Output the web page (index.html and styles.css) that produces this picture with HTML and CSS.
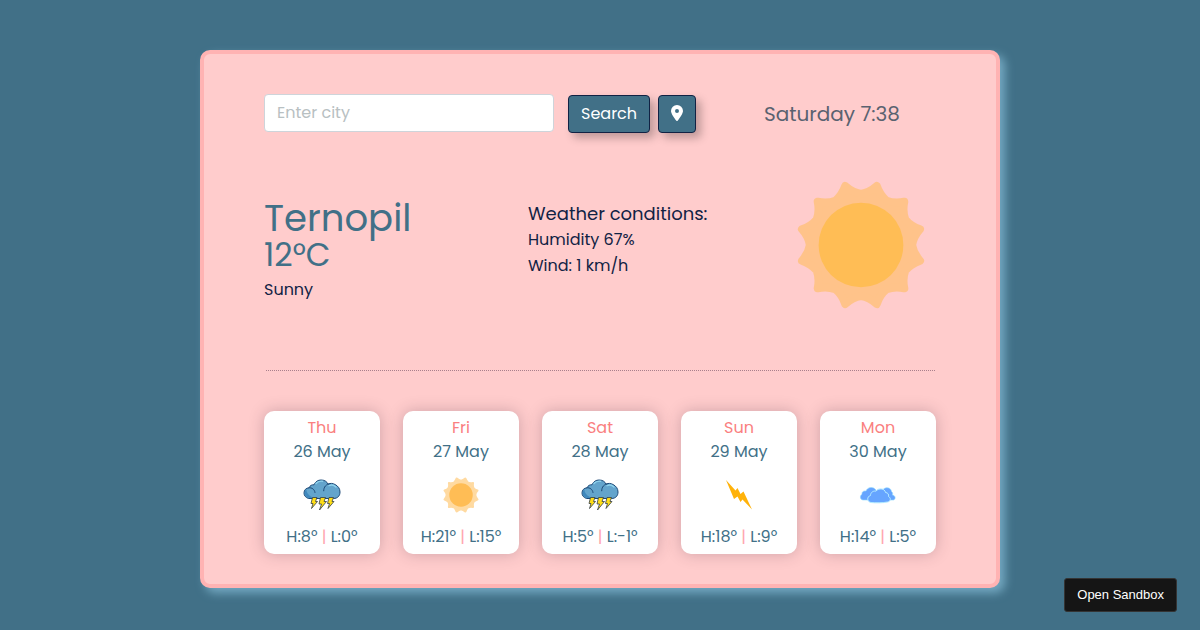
FILE: index.html
```html
<!DOCTYPE html>
<html lang="en">
<head>
<meta charset="utf-8">
<meta name="viewport" content="width=device-width, initial-scale=1">
<title>Weather app</title>
<link rel="stylesheet" href="styles.css">
</head>
<body>
<svg class="sprite" aria-hidden="true">
  <symbol id="sun" viewBox="-66 -66 132 132">
    <path opacity=".55" fill="#ffbd55" stroke="#ffbd55" stroke-width="8" stroke-linejoin="round" d="M0-52Q8.400-53.300 16-60Q19.400-50.400 26-45Q34-42 44-44Q42-34 45-26Q50.400-19.400 60-16Q53.300-8.400 52 0Q53.300 8.400 60 16Q50.400 19.400 45 26Q42 34 44 44Q34 42 26 45Q19.400 50.400 16 60Q8.400 53.300 0 52Q-8.400 53.300-16 60Q-19.400 50.400-26 45Q-34 42-44 44Q-42 34-45 26Q-50.400 19.400-60 16Q-53.300 8.400-52 0Q-53.300-8.400-60-16Q-50.400-19.400-45-26Q-42-34-44-44Q-34-42-26-45Q-19.400-50.400-16-60Q-8.400-53.300 0-52Z"/>
    <circle r="43" fill="#ffbd55"/>
  </symbol>
  <symbol id="storm" viewBox="0 0 38 32">
    <path fill="#63a4cc" stroke="#1d4a78" stroke-width="1" stroke-linejoin="round" d="M5.5 19.500C2.500 18.500 1 16.500 1 14c0-3 2-5 5-5.200C7 6.500 9 5.500 11 5.800 12.500 2.500 15 1 18 1c3.500 0 6 1.500 7 4.200 2-1.200 5-1 7 .3 3 1.500 5 4 5 7.500 0 4-2.500 6.500-6.500 6.500Z"/>
    <path fill="#3f88bd" d="M6 19C3 18 1.600 16.500 1.600 14c0-1.500.6-3 1.800-3.800C3.500 14 6 17 11 19Z"/>
    <path fill="none" stroke="#1d4a78" stroke-width="1" stroke-linecap="round" d="M6 8.800c3-.4 5.500 1.500 6 4.700M27 4.800c-4 .2-6.300 3.200-6.300 7"/>
    <path fill="none" stroke="#8ed1ec" stroke-width="1.400" stroke-linecap="round" d="M13 4.500c1.500-1.800 3.500-2.700 6.500-2.300M26 6.700c2.500-1.200 5-.8 7 1.200"/>
    <path fill="#ffde16" stroke="#333d4a" stroke-width=".8" stroke-linejoin="round" d="m9.500 18.500 4.500 0-1.500 4 2 0-6 7 1.500-5-2 0ZM17.500 18.500l5 0-1.500 4 2.500 0-7 8.500 2-6-2.500 0ZM26 18.500l4.500 0-1.500 4 2 0-6 7 1.500-5-2 0Z"/>
  </symbol>
  <symbol id="bolt" viewBox="0 0 28 32">
    <path fill="#ffb20a" d="M1 1 10.500 11.500 12.500 9 15.500 15 18.500 12.500 27 30.500 17.500 20.500 15.500 23 12.500 17.500 9 20Z"/>
  </symbol>
  <symbol id="cloud" viewBox="0 0 38 18">
    <g fill="#66a5ff" stroke="#8dd9ff" stroke-width=".6" stroke-linejoin="round">
      <path d="M4 14C1 13.500.5 10 3 8.200 2.500 6 4.500 4.500 7 5 8.500 1 14 0 17 4l1 10Z"/>
      <path d="M22 14 24 3.500c3-3 8-2 8.500 2 1.500 1.200 1.200 2.500.8 3.500 3 .2 4 4 1.200 5Z"/>
      <path stroke="#b5ecff" stroke-width="1" d="M12 16.500c-4-.5-4.500-6-.5-7C11.500 6 15 4.500 17 5.200c2-3.500 9-3 9.500 1.300 2.500.2 3.500 2 3 4 3 1.500 2 5-1 5.500-5 1-12 1-16.500.5Z"/>
    </g>
  </symbol>
</svg>

<main class="weather">
  <header class="top">
    <form class="search" onsubmit="return false">
      <input class="search-input" type="text" placeholder="Enter city" aria-label="City">
      <button class="btn" type="submit">Search</button>
      <button class="btn btn-pin" type="button" aria-label="Use current location">
        <svg width="12" height="16" viewBox="0 0 12 16"><path fill="#fff" fill-rule="evenodd" d="M6 0a6 6 0 0 1 6 6c0 2.700-3.600 7.500-5.200 9.600a1 1 0 0 1-1.600 0C3.600 13.500 0 8.700 0 6a6 6 0 0 1 6-6Zm0 4a2 2 0 1 0 0 4 2 2 0 0 0 0-4Z"/></svg>
      </button>
    </form>
    <time class="now">Saturday 7:38</time>
  </header>

  <section class="current">
    <div>
      <h1 class="city">Ternopil</h1>
      <p class="temp">12°C</p>
      <p class="line">Sunny</p>
    </div>
    <div class="conditions">
      <h2 class="conditions-title">Weather conditions:</h2>
      <p class="line">Humidity 67%</p>
      <p class="line">Wind: 1 km/h</p>
    </div>
    <svg class="current-icon" role="img" aria-label="Sunny"><use href="#sun"/></svg>
  </section>

  <hr class="divider">

  <section class="forecast">
    <article class="day"><h3 class="day-name">Thu</h3><p>26 May</p><svg class="day-icon" width="38" height="32"><use href="#storm"/></svg><p>H:8° <span class="bar">|</span> L:0°</p></article>
    <article class="day"><h3 class="day-name">Fri</h3><p>27 May</p><svg class="day-icon" width="36" height="36"><use href="#sun"/></svg><p>H:21° <span class="bar">|</span> L:15°</p></article>
    <article class="day"><h3 class="day-name">Sat</h3><p>28 May</p><svg class="day-icon" width="38" height="32"><use href="#storm"/></svg><p>H:5° <span class="bar">|</span> L:-1°</p></article>
    <article class="day"><h3 class="day-name">Sun</h3><p>29 May</p><svg class="day-icon" width="28" height="32"><use href="#bolt"/></svg><p>H:18° <span class="bar">|</span> L:9°</p></article>
    <article class="day"><h3 class="day-name">Mon</h3><p>30 May</p><svg class="day-icon" width="38" height="18"><use href="#cloud"/></svg><p>H:14° <span class="bar">|</span> L:5°</p></article>
  </section>
</main>

<button class="sandbox" type="button">Open Sandbox</button>
</body>
</html>
```

FILE: styles.css
```css
* {
  box-sizing: border-box;
}

body {
  margin: 0;
  padding: 50px 20px 40px;
  background: #417087;
  color: #112244;
  font: 16px/24px Poppins, Inter, "Open Sans", sans-serif;
}

h1, h2, h3, p {
  margin: 0;
  font-weight: 400;
}

.sprite {
  position: absolute;
  width: 0;
  height: 0;
}

.weather {
  max-width: 800px;
  margin: 0 auto;
  padding: 40px 60px 30px;
  border: 4px solid #ffb3b3;
  border-radius: 10px;
  background: #ffcccc;
  box-shadow: 5px 5px 10px #74a9c2;
}

.top {
  display: flex;
  flex-wrap: wrap;
  align-items: center;
  justify-content: space-between;
  gap: 12px;
  padding-right: 36px;
}

.search {
  display: flex;
  gap: 8px;
}

.search-input {
  width: 290px;
  height: 38px;
  margin-right: 6px;
  padding: 5px 12px 7px;
  border: 1px solid #ced4da;
  border-radius: 4px;
  background: #fff;
  color: #417087;
  font: inherit;
}

.search-input::placeholder {
  color: #b8c0c2;
  opacity: 1;
}

.btn {
  height: 38px;
  margin-top: 1px;
  padding: 0 12px;
  border: 1px solid #112244;
  border-radius: 4px;
  background: #417087;
  box-shadow: 5px 5px 8px rgba(0, 0, 0, 0.25);
  color: #fff;
  font: inherit;
  cursor: pointer;
}

.btn-pin {
  display: flex;
  align-items: center;
  padding-bottom: 2px;
}

.now {
  color: #5a6270;
  font-size: 20px;
}

.current {
  display: grid;
  grid-template-columns: 264px 1fr 150px;
  margin-top: 47px;
}

.city {
  margin-top: 20px;
  color: #417087;
  font-size: 37px;
  line-height: 37px;
}

.temp {
  margin-bottom: 4px;
  color: #417087;
  font-size: 32px;
  line-height: 36px;
}

.line {
  line-height: 26px;
}

.conditions {
  padding-top: 21px;
}

.conditions-title {
  font-size: 18px;
  line-height: 26px;
}

.current-icon {
  width: 130px;
  height: 130px;
  justify-self: center;
}

.divider {
  margin: 60px 1px 40px 2px;
  border: 0;
  border-top: 1px dotted #a9808c;
}

.forecast {
  display: grid;
  grid-template-columns: repeat(5, 1fr);
  gap: 23px;
}

.day {
  display: grid;
  grid-template-rows: 24px 24px 61px 24px;
  place-items: center;
  padding: 5px 0;
  border-radius: 10px;
  background: #fff;
  box-shadow: 0 0 15px rgba(65, 40, 60, 0.25);
  color: #417087;
}

.day-name {
  color: #fa8080;
  font-size: 16px;
}

.bar {
  color: #ffa6b0;
}

.sandbox {
  position: fixed;
  right: 23px;
  bottom: 18px;
  height: 34px;
  padding: 0 12px 2px;
  border: 1px solid #343434;
  border-radius: 3px;
  background: #151515;
  color: #fff;
  font: 13px "Liberation Sans", Arial, sans-serif;
  cursor: pointer;
}

@media (max-width: 760px) {
  .weather {
    padding: 24px;
  }

  .current {
    grid-template-columns: 1fr;
    gap: 16px;
  }

  .forecast {
    grid-template-columns: repeat(auto-fit, minmax(110px, 1fr));
  }
}
```
